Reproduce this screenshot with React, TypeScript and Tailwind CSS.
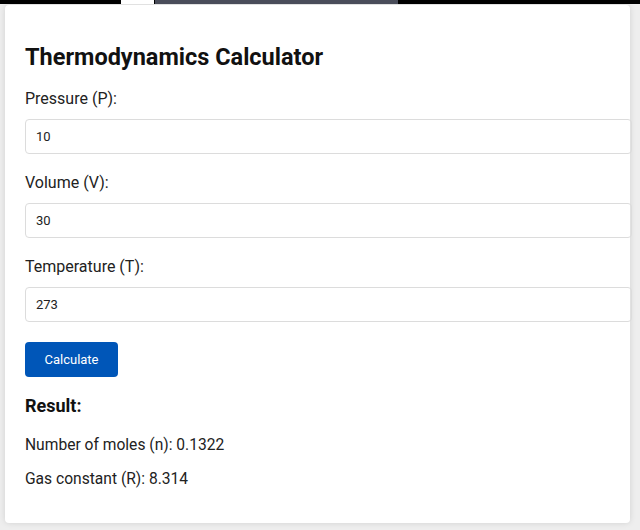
import { useState } from "react"

export default function App() {
  const [pressure, setPressure] = useState("10")
  const [volume, setVolume] = useState("30")
  const [temperature, setTemperature] = useState("273")
  const [moles, setMoles] = useState("0.1322")

  const R = 8.314

  const calculate = () => {
    const n = (parseFloat(pressure) * parseFloat(volume)) / (R * parseFloat(temperature))
    setMoles(isNaN(n) ? "—" : n.toFixed(4))
  }

  const fields = [
    { label: "Pressure (P):", value: pressure, set: setPressure },
    { label: "Volume (V):", value: volume, set: setVolume },
    { label: "Temperature (T):", value: temperature, set: setTemperature },
  ]

  return (
    <div className="w-[640px] h-[530px] overflow-hidden bg-[#eeeeee] font-['Roboto',sans-serif] text-[#111]">
      {/* browser strip */}
      <div className="flex h-[4px] bg-black">
        <div className="ml-[121px] w-[33px] bg-white" />
        <div className="ml-px w-[243px] bg-[#4a4d5a]" />
      </div>

      <div className="pl-[5px] pr-[10px] pt-px">
        <div className="bg-white rounded-[4px] shadow-[0_0_6px_rgba(0,0,0,0.12)] px-5 pt-[38px] pb-[32px]">
          <h2 className="text-[23.5px] leading-[28px] font-bold">Thermodynamics Calculator</h2>

          {fields.map((f, i) => (
            <div key={f.label} className={i === 0 ? "mt-[16px]" : "mt-[17px]"}>
              <label className="block text-[16px] leading-[24px] text-[#222]">{f.label}</label>
              <input
                type="number"
                value={f.value}
                onChange={(e) => f.set(e.target.value)}
                className="box-content block w-full mt-[8px] h-[33px] px-[10px] border border-[#dcdcdc] rounded-[4px] text-[13px] text-[#222] outline-none [appearance:textfield]"
              />
            </div>
          ))}

          <button
            onClick={calculate}
            className="mt-[20px] h-[35px] w-[93px] rounded-[4px] bg-[#0056b8] text-white text-[13px] font-normal"
          >
            Calculate
          </button>

          <h3 className="mt-[17px] text-[18px] leading-[24px] font-bold">Result:</h3>
          <p className="mt-[15px] text-[15.6px] leading-[24px] text-[#222]">Number of moles (n): {moles}</p>
          <p className="mt-[10px] text-[15.6px] leading-[24px] text-[#222]">Gas constant (R): {R}</p>
        </div>
      </div>
    </div>
  )
}
